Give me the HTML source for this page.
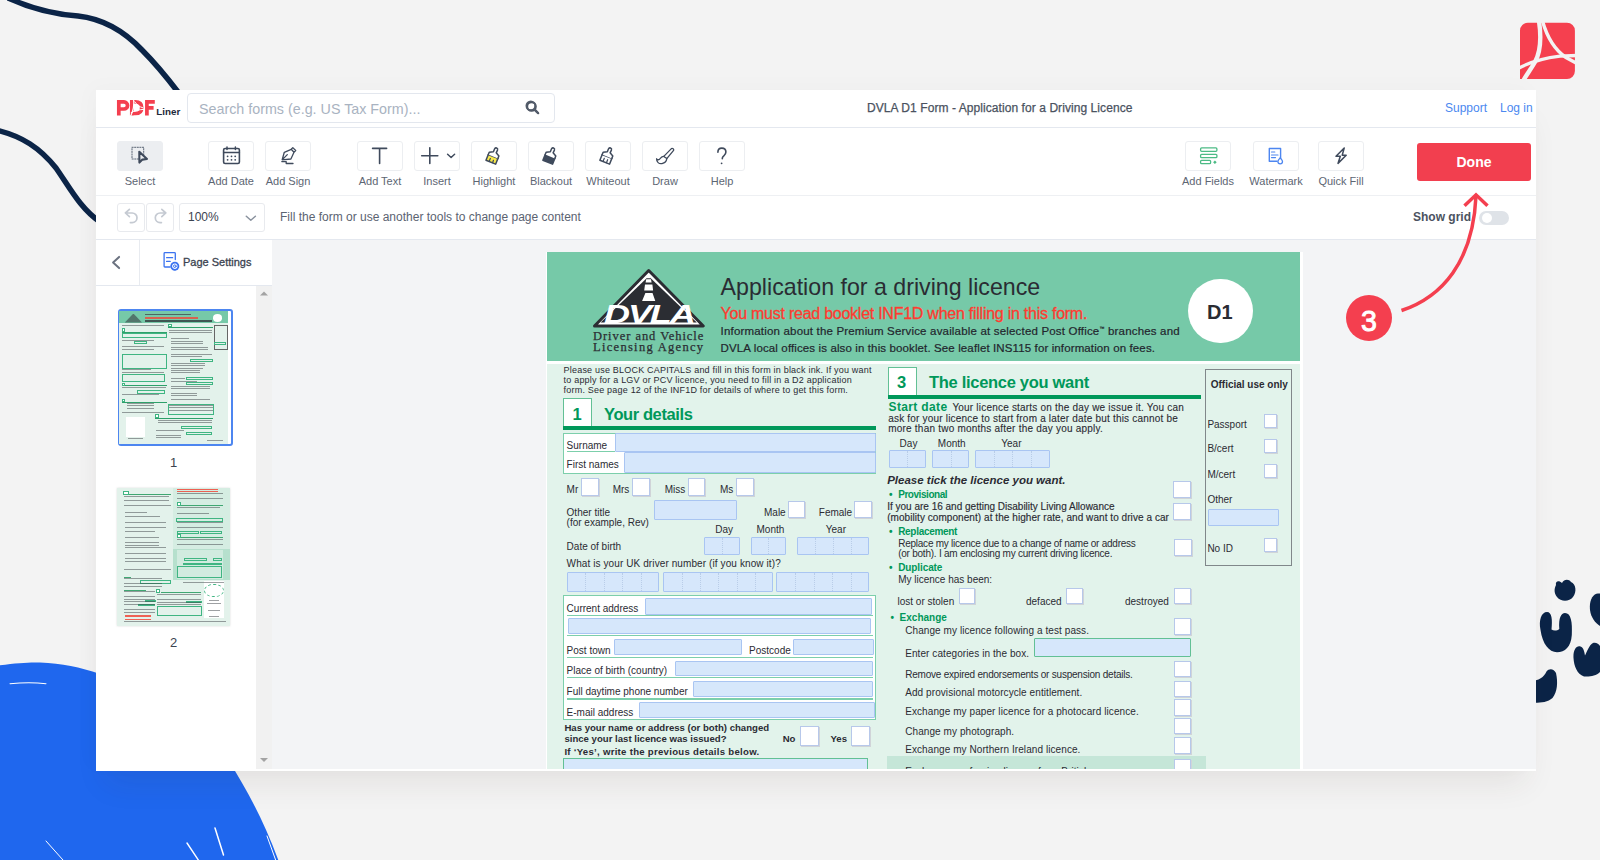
<!DOCTYPE html>
<html><head><meta charset="utf-8">
<style>
*{box-sizing:border-box;margin:0;padding:0}
html,body{width:1600px;height:860px;overflow:hidden;background:#f3f3f3;font-family:"Liberation Sans",sans-serif}
body{position:relative}
.a{position:absolute}
.hl{position:absolute;height:1px;background:#e6e9ef}
.tb{position:absolute;top:141px;width:46px;height:30px;border:1px solid #eceef1;border-radius:3px;background:#fff}
.tb.sel{background:#eceef1;border-color:#eceef1}
.tl{position:absolute;top:175px;font-size:11px;color:#5d6673;text-align:center;width:90px;margin-left:-22px;white-space:nowrap;line-height:12px}
.tb svg{position:absolute;left:0;top:0}
.wt{white-space:nowrap;line-height:1}
.t{position:absolute;white-space:nowrap;line-height:1}
</style></head>
<body>
<!-- background decorations -->
<svg class="a" style="left:0;top:0" width="1600" height="860">
  <defs>
    <filter id="sh" x="-10%" y="-10%" width="120%" height="130%"><feGaussianBlur stdDeviation="10"/></filter>
  </defs>
  <path d="M8,-2 C30,8 50,14 78,16 C105,19 125,32 142,50 C155,63 165,75 178,92" fill="none" stroke="#0b2447" stroke-width="5.5"/>
  <path d="M-4,130 C22,136 40,148 56,168 C70,188 80,208 100,222" fill="none" stroke="#0b2447" stroke-width="5.5"/>
  <!-- blue blob -->
  <path d="M-5,666 C15,663 30,662 40,662.5 C62,663.5 80,667 100,674 L200,720 L226,757 C240,778 262,815 279,862 L-5,862 Z" fill="#1f67ee"/>
  <g stroke="#fff" stroke-linecap="round" fill="none">
    <path d="M10,683.8 C22,682.5 36,682.5 46,683.8" stroke-width="1.1"/>
    <path d="M46,841 L63,860" stroke-width="1"/>
    <path d="M187,843 L199,861" stroke-width="1.4"/>
    <path d="M215,828 L223.5,855" stroke-width="1.5"/>
    <path d="M267,836 L276,861" stroke-width="1"/>
  </g>
  <!-- navy splotches -->
  <g fill="#0b2447">
    <path d="M1556,585 C1555,581 1559,580 1562,583 C1564,579 1569,579 1571,582 C1576,584 1577,592 1573,597 C1569,602 1561,602 1557,597 C1554,593 1554,589 1556,585 Z"/>
    <path d="M1540.5,630 C1538.5,620 1541.5,612 1547,612 C1552,612 1552.5,620 1551.5,629.5 C1553.5,631 1557,631 1559.3,629 C1558.5,618 1561,613 1565,613 C1571,613 1572.5,622 1571.8,635 C1571,647 1565,652.2 1557,652.2 C1549,652.2 1542.5,644 1540.5,630 Z"/>
    <path d="M1590,610 C1589,600 1593,594 1598,593.6 L1601,593.6 L1601,626.5 C1596,624 1591,618 1590,610 Z"/>
    <path d="M1573.5,658 C1573,650 1576.5,645 1580.5,646.5 C1583.5,647.5 1584.5,652 1585,655.5 C1587,652 1589,645 1593,643 C1598,642 1601,646 1601,650 L1601,671 C1597,676 1590,677 1584,676.5 C1577,674 1574,666 1573.5,658 Z"/>
    <path d="M1530,681 C1539,681 1544,677 1546.5,671.5 C1549,668 1554,668.5 1556,673 C1558,682 1557.5,692 1552.5,698 C1547,703 1538,703 1530,702.7 Z"/>
  </g>
  <!-- pdf logo top right -->
  <path d="M1527.9,22.8 L1567,22.8 A7.9,7.9 0 0 1 1574.9,30.7 L1574.9,71.1 A7.9,7.9 0 0 1 1567,79 L1520,79 L1520,30.7 A7.9,7.9 0 0 1 1527.9,22.8 Z" fill="#f5404f"/>
  <g stroke="#f3f3f3" fill="none">
    <path d="M1539,21 C1541.5,38 1540.5,52 1535,62 C1531,69 1527,74 1523,81" stroke-width="4.4"/>
    <path d="M1542.5,21 C1547,37 1555,50 1566,57.5 L1577,63.5" stroke-width="3.4"/>
    <path d="M1518,68.5 C1529,62.5 1542,58.5 1560,56.2 L1577,55.5" stroke-width="3.3"/>
  </g>
  <!-- window shadow -->
</svg>

<!-- window -->
<div class="a" style="left:96px;top:90px;width:1440px;height:681px;background:#fff;box-shadow:0 22px 30px -10px rgba(70,50,40,0.085), -6px -4px 20px rgba(0,0,0,0.02)"></div>
<div class="hl" style="left:96px;top:127px;width:1440px;background:#e4e8ef"></div>
<div class="hl" style="left:96px;top:195px;width:1440px;background:#eef0f3"></div>
<div class="hl" style="left:96px;top:239px;width:1440px;background:#e4e8ef"></div>

<!-- header -->
<svg class="a" style="left:110px;top:94px" width="50" height="26" viewBox="110 94 50 26" fill="none">
<path d="M118.8,115.4 L118.8,101.9 L124,101.9 A3.55,3.55 0 0 1 124,109 L118.8,109" stroke="#f43f4f" stroke-width="3.7"/>
<path d="M131.8,115.4 L131.8,101.9 L135.3,101.9 C140.3,101.9 141.7,105 141.7,107.7 C141.7,110.7 140.3,113.5 135.3,113.5 L131.8,113.5" stroke="#f43f4f" stroke-width="3.7"/>
<path d="M146.9,115.4 L146.9,101.9 L154.8,101.9 M146.9,107.9 L153.6,107.9" stroke="#f43f4f" stroke-width="3.7"/>
<path d="M133.6,99.5 C134.4,105 133.6,110 130.5,116.5" stroke="#fff" stroke-width="1.2"/>
<path d="M134.6,101.5 C136.5,104.5 139,106.8 143.5,108" stroke="#fff" stroke-width="1"/>
<path d="M130.8,112.8 C134.8,110.6 138.8,109.6 144,109.4" stroke="#fff" stroke-width="1"/>
</svg>
<div class="a wt" style="left:156.3px;top:106.6px;font-size:9.8px;font-weight:bold;color:#1e2a3b">Liner</div>
<div class="a" style="left:187px;top:93px;width:368px;height:30px;border:1px solid #e3e7ee;border-radius:4px"></div>
<div class="a wt" style="left:199px;top:102px;font-size:14.3px;color:#a9b3c1">Search forms (e.g. US Tax Form)...</div>
<svg class="a" style="left:525px;top:100px" width="16" height="16" viewBox="0 0 16 16"><circle cx="6.5" cy="6.5" r="4.3" fill="none" stroke="#4a5361" stroke-width="2"/><path d="M9.6,9.6 L13.2,13.2" stroke="#4a5361" stroke-width="2.2" stroke-linecap="round"/></svg>
<div class="a wt" style="left:867px;top:102px;font-size:12px;color:#4a5260;-webkit-text-stroke:0.25px #4a5260;letter-spacing:0.07px">DVLA D1 Form - Application for a Driving Licence</div>
<div class="a wt" style="left:1445px;top:102px;font-size:12px;color:#4b88f0">Support</div>
<div class="a wt" style="left:1500px;top:102px;font-size:12px;color:#4b88f0">Log in</div>

<!-- toolbar -->
<div class="tb sel" style="left:117px"></div><div class="tl" style="left:117px">Select</div>
<div class="tb" style="left:208px"></div><div class="tl" style="left:208px">Add Date</div>
<div class="tb" style="left:265px"></div><div class="tl" style="left:265px">Add Sign</div>
<div class="tb" style="left:357px"></div><div class="tl" style="left:357px">Add Text</div>
<div class="tb" style="left:414px"></div><div class="tl" style="left:414px">Insert</div>
<div class="tb" style="left:471px"></div><div class="tl" style="left:471px">Highlight</div>
<div class="tb" style="left:528px"></div><div class="tl" style="left:528px">Blackout</div>
<div class="tb" style="left:585px"></div><div class="tl" style="left:585px">Whiteout</div>
<div class="tb" style="left:642px"></div><div class="tl" style="left:642px">Draw</div>
<div class="tb" style="left:699px"></div><div class="tl" style="left:699px">Help</div>
<div class="tb" style="left:1185px"></div><div class="tl" style="left:1185px">Add Fields</div>
<div class="tb" style="left:1253px"></div><div class="tl" style="left:1253px">Watermark</div>
<div class="tb" style="left:1318px"></div><div class="tl" style="left:1318px">Quick Fill</div>
<div class="a" style="left:1417px;top:143px;width:114px;height:38px;background:#f23f4f;border-radius:3px"></div>
<div class="a wt" style="left:1417px;top:155px;width:114px;text-align:center;font-size:14px;font-weight:bold;color:#fff">Done</div>

<!-- third row -->
<div class="a" style="left:117px;top:203px;width:28px;height:29px;border:1px solid #e8eaee;border-radius:3px"></div>
<div class="a" style="left:146px;top:203px;width:28px;height:29px;border:1px solid #e8eaee;border-radius:3px"></div>
<div class="a" style="left:179px;top:203px;width:86px;height:29px;border:1px solid #e8eaee;border-radius:3px"></div>
<div class="a wt" style="left:188px;top:211px;font-size:12px;color:#3b4350">100%</div>
<div class="a wt" style="left:280px;top:211px;font-size:12px;color:#5b6371">Fill the form or use another tools to change page content</div>
<div class="a wt" style="left:1413px;top:211px;font-size:12px;font-weight:bold;color:#4a5260">Show grid</div>
<div class="a" style="left:1479px;top:211px;width:30px;height:14px;border-radius:7px;background:#dfe3e8"></div>
<div class="a" style="left:1482px;top:213px;width:10px;height:10px;border-radius:5px;background:#fff"></div>

<!-- chrome icons -->
<svg class="a" style="left:0;top:0" width="1600" height="860" fill="none" stroke-linecap="round" stroke-linejoin="round">
  <!-- search -->
  <circle cx="530.8" cy="105.8" r="4.4" stroke="#535c6a" stroke-width="1.8"/>
  <path d="M534.2,109.2 L537.8,112.8" stroke="#535c6a" stroke-width="2"/>
  <!-- select -->
  <rect x="132" y="147.3" width="11.7" height="11.7" stroke="#5a6474" stroke-width="1" stroke-dasharray="1.2 1.4"/>
  <path d="M139.3,151.8 L139.4,162.6 L142.4,159.6 L147,159 Z" fill="#eceef1" stroke="#3f4a5c" stroke-width="2.1"/>
  <!-- calendar -->
  <rect x="223.6" y="148.5" width="15.8" height="15" rx="1.5" stroke="#3f4a5c" stroke-width="1.6"/>
  <path d="M223.6,152.6 L239.4,152.6 M227,147 L227,149.5 M235.4,147 L235.4,149.5" stroke="#3f4a5c" stroke-width="1.5"/>
  <g fill="#3f4a5c"><circle cx="227.6" cy="156.3" r="0.9"/><circle cx="231.5" cy="156.3" r="0.9"/><circle cx="235.2" cy="156.3" r="0.9"/><circle cx="227.6" cy="159.8" r="0.9"/><circle cx="231.5" cy="159.8" r="0.9"/><circle cx="235.2" cy="159.8" r="0.9"/></g>
  <!-- pen -->
  <path d="M282.2,159.8 L284.3,152.3 L291.2,149.3 L294,152.2 L290.9,159 Z M291.2,149.3 L292.8,147.6 L295.7,150.5 L294,152.2 M282.4,159.6 L287.3,154.6" stroke="#3f4a5c" stroke-width="1.3"/>
  <path d="M281.8,161.6 L286.2,161.6 L286.2,163.5 L293,163.5" stroke="#3f4a5c" stroke-width="1.3"/>
  <!-- T -->
  <path d="M372.6,148.4 L386.6,148.4 M379.6,148.4 L379.6,163.4" stroke="#3f4a5c" stroke-width="1.6"/>
  <!-- plus + chevron -->
  <path d="M421.7,155.8 L437.8,155.8 M429.8,147.8 L429.8,163.5" stroke="#3f4a5c" stroke-width="1.6"/>
  <path d="M447.6,154.3 L451.1,157.5 L454.6,154.3" stroke="#3f4a5c" stroke-width="1.5"/>
  <!-- highlight brush -->
  <g transform="translate(493.5 155.5) rotate(22)">
    <path d="M-5.2,1 L5.2,1 L5.2,7.2 L-5.2,7.2 Z" fill="#f7e84a" stroke="#3f4a5c" stroke-width="1.5"/>
    <path d="M-5.2,1 L-5.2,-1.5 L-1.5,-3.5 L-1.5,-6.5 A1.6,1.6 0 0 1 1.7,-6.5 L1.5,-3.5 L5.2,-1.5 L5.2,1" fill="#fff" stroke="#3f4a5c" stroke-width="1.5"/>
    <path d="M-1.8,4 L-1.8,7 M1.8,4.5 L1.8,7" stroke="#3f4a5c" stroke-width="1.2"/>
  </g>
  <!-- blackout brush -->
  <g transform="translate(550.4 155.5) rotate(22)">
    <path d="M-5.2,1 L5.2,1 L5.2,7.2 L-5.2,7.2 Z" fill="#3f4a5c" stroke="#3f4a5c" stroke-width="1.5"/>
    <path d="M-5.2,1 L-5.2,-1.5 L-1.5,-3.5 L-1.5,-6.5 A1.6,1.6 0 0 1 1.7,-6.5 L1.5,-3.5 L5.2,-1.5 L5.2,1" fill="#fff" stroke="#3f4a5c" stroke-width="1.5"/>
  </g>
  <!-- whiteout brush -->
  <g transform="translate(607.4 155.5) rotate(22)">
    <path d="M-5.2,1 L5.2,1 L5.2,7.2 L-5.2,7.2 Z" fill="#fff" stroke="#3f4a5c" stroke-width="1.5"/>
    <path d="M-5.2,1 L-5.2,-1.5 L-1.5,-3.5 L-1.5,-6.5 A1.6,1.6 0 0 1 1.7,-6.5 L1.5,-3.5 L5.2,-1.5 L5.2,1" fill="#fff" stroke="#3f4a5c" stroke-width="1.5"/>
    <path d="M-1.8,3.8 L-1.8,7 M1.8,3.8 L1.8,7" stroke="#3f4a5c" stroke-width="1.2"/>
  </g>
  <!-- draw -->
  <path d="M663.8,156.4 L671.4,148.6 A1.5,1.5 0 0 1 673.6,150.4 L666.8,158.6 Z" stroke="#3f4a5c" stroke-width="1.3"/>
  <path d="M663.8,156.4 C661.5,156.2 660.6,158.2 659.5,159.2 C658.5,160 657.4,159.8 656.6,158.8 C656.4,162 659,164.2 662,163.6 C664.8,163 666.5,160.8 666.8,158.6" stroke="#3f4a5c" stroke-width="1.3"/>
  <!-- help -->
  <path d="M717.9,152.2 C717.9,149.6 719.6,148.1 721.8,148.1 C724.2,148.1 725.9,149.8 725.9,152 C725.9,154.3 724.2,155.3 723.1,156.6 C722.5,157.3 722.3,158 722.3,158.8" stroke="#3f4a5c" stroke-width="1.6"/>
  <circle cx="721.6" cy="163.3" r="0.9" fill="#3f4a5c"/>
  <!-- add fields -->
  <g stroke="#4cbb85" stroke-width="1.3">
    <rect x="1200.6" y="147.9" width="16.3" height="3.4" rx="1"/>
    <rect x="1200.6" y="154.3" width="16.3" height="3.4" rx="1"/>
    <rect x="1200.6" y="160.3" width="10" height="3.4" rx="1"/>
  </g>
  <path d="M1214.9,160.4 L1216.7,162.2 L1214.9,164 L1213.1,162.2 Z" fill="#4cbb85"/>
  <!-- watermark -->
  <path d="M1280.6,158.5 L1280.6,148.5 L1269.3,148.5 L1269.3,161.2 L1277,161.2" stroke="#4d86f0" stroke-width="1.4"/>
  <path d="M1271.5,152 L1274.8,152 M1271.5,155 L1278,155 M1271.5,157.6 L1275.5,157.6" stroke="#4d86f0" stroke-width="1.2"/>
  <path d="M1280.2,157.8 C1281.6,159.4 1282.5,160.4 1282.5,161.5 A2.3,2.3 0 0 1 1277.9,161.5 C1277.9,160.4 1278.8,159.4 1280.2,157.8 Z" stroke="#4d86f0" stroke-width="1.3"/>
  <!-- quick fill -->
  <path d="M1344.2,148 L1336,156.3 L1340.3,156.3 L1338,163.4 L1346.2,155.3 L1342.2,155.3 Z" stroke="#3f4a5c" stroke-width="1.5"/>
  <!-- undo / redo -->
  <path d="M129.4,209.4 L125.4,213 L129.4,216.7 M125.6,213 L132.2,213 A4.8,4.8 0 0 1 132.2,222.6 L130.4,222.6" stroke="#c5cad2" stroke-width="1.7"/>
  <path d="M161.8,209.4 L165.8,213 L161.8,216.7 M165.6,213 L160.1,213 A4.8,4.8 0 0 0 160.1,222.6 L161.4,222.6" stroke="#c5cad2" stroke-width="1.7"/>
  <!-- zoom chevron -->
  <path d="M246.3,216.3 L250.8,220.3 L255.4,216.3" stroke="#8a929e" stroke-width="1.5"/>
  <!-- back chevron -->
  <path d="M119.1,256.9 L113.1,262.5 L119.1,268.1" stroke="#6b7280" stroke-width="2"/>
  <!-- page settings icon -->
  <path d="M175.3,259.5 L175.3,253.5 A0.8,0.8 0 0 0 174.5,252.7 L164.9,252.7 A0.8,0.8 0 0 0 164.1,253.5 L164.1,266.2 A0.8,0.8 0 0 0 164.9,267 L170,267" stroke="#3b73f0" stroke-width="1.3"/>
  <path d="M166.6,257.7 L172.6,257.7 M166.6,261.4 L170.2,261.4" stroke="#3b73f0" stroke-width="1.3"/>
  <circle cx="174.8" cy="266.2" r="3.6" stroke="#3b73f0" stroke-width="1.8" stroke-dasharray="1.6 0.9"/>
  <circle cx="174.8" cy="266.2" r="1.3" stroke="#3b73f0" stroke-width="1"/>
</svg>
<!-- left panel -->
<div class="a" style="left:138.5px;top:240px;width:1px;height:45px;background:#e8ebf0"></div>
<div class="hl" style="left:96px;top:285px;width:176px;background:#e4e8ef"></div>
<div class="a" style="left:256px;top:286px;width:16px;height:483px;background:#f1f1f1"></div>
<div class="a" style="left:272px;top:240px;width:1264px;height:529px;background:#f3f4f6"></div>
<div class="a wt" style="left:183px;top:257px;font-size:11px;color:#3b4350;-webkit-text-stroke:0.3px #3b4350">Page Settings</div>
<div class="a wt" style="left:170px;top:456px;font-size:13px;color:#3b4350">1</div>
<div class="a wt" style="left:170px;top:636px;font-size:13px;color:#3b4350">2</div>
<div class="a" style="left:0;top:0;width:1600px;height:860px;filter:blur(0.35px)">
<div class="a" style="left:117.5px;top:309.0px;width:115.2px;height:137.0px;background:#fff;border:2px solid #4d86f0;border-radius:3px"></div>
<div class="a" style="left:119.1px;top:310.6px;width:109.0px;height:133.3px;background:#e3f2eb"></div>
<div class="a" style="left:119.1px;top:310.6px;width:109.0px;height:12.8px;background:#76c9a8"></div>
<div class="a" style="left:124.8px;top:313.6px;width:17.2px;height:9.0px;background:#3b3f44;clip-path:polygon(50% 0,100% 100%,0 100%);opacity:.6"></div>
<div class="a" style="left:144.5px;top:313.9px;width:46.7px;height:1.3px;background:#3a3d44;opacity:.7"></div>
<div class="a" style="left:144.5px;top:317.3px;width:53.3px;height:1.5px;background:#f0483a;opacity:.8"></div>
<div class="a" style="left:144.5px;top:319.6px;width:67.2px;height:3.1px;background:repeating-linear-gradient(#2c3036 0 2px,transparent 2px 3.5px);opacity:.75"></div>
<div class="a" style="left:212.5px;top:314.4px;width:9.0px;height:7.4px;background:#fff;border-radius:50%"></div>
<div class="a" style="left:121.6px;top:328.0px;width:3.6px;height:3.9px;background:#fff;border:1px solid #3fb582"></div>
<div class="a" style="left:168.3px;top:323.9px;width:3.6px;height:3.6px;background:#fff;border:1px solid #3fb582"></div>
<div class="a" style="left:121.6px;top:398.8px;width:3.6px;height:3.0px;background:#fff;border:1px solid #3fb582"></div>
<div class="a" style="left:155.2px;top:414.4px;width:4.1px;height:4.1px;background:#fff;border:1px solid #3fb582"></div>
<div class="a" style="left:121.6px;top:331.6px;width:45.1px;height:0.7px;background:#2ea06a"></div>
<div class="a" style="left:168.3px;top:327.3px;width:45.1px;height:0.5px;background:#2ea06a"></div>
<div class="a" style="left:121.6px;top:401.6px;width:45.1px;height:0.5px;background:#2ea06a"></div>
<div class="a" style="left:155.2px;top:418.3px;width:58.2px;height:0.5px;background:#2ea06a"></div>
<div class="a" style="left:121.6px;top:385.4px;width:45.1px;height:0.5px;background:#2ea06a"></div>
<div class="a" style="left:121.6px;top:332.9px;width:45.1px;height:5.6px;border:1px solid #3fb582"></div>
<div class="a" style="left:134.3px;top:341.1px;width:12.6px;height:3.0px;border:1px solid #3fb582"></div>
<div class="a" style="left:121.6px;top:353.7px;width:45.1px;height:15.6px;border:1px solid #3fb582"></div>
<div class="a" style="left:121.6px;top:374.2px;width:43.4px;height:7.4px;border:1px solid #3fb582"></div>
<div class="a" style="left:137.1px;top:390.3px;width:27.9px;height:3.3px;border:1px solid #3fb582"></div>
<div class="a" style="left:189.6px;top:358.5px;width:23.3px;height:3.1px;border:1px solid #3fb582"></div>
<div class="a" style="left:185.5px;top:376.5px;width:27.4px;height:3.1px;border:1px solid #3fb582"></div>
<div class="a" style="left:185.5px;top:382.1px;width:27.4px;height:3.3px;border:1px solid #3fb582"></div>
<div class="a" style="left:168.3px;top:403.7px;width:46.2px;height:11.5px;border:1px solid #3fb582"></div>
<div class="a" style="left:180.6px;top:426.3px;width:31.1px;height:3.0px;border:1px solid #3fb582"></div>
<div class="a" style="left:185.5px;top:432.2px;width:26.2px;height:3.0px;border:1px solid #3fb582"></div>
<div class="a" style="left:214.2px;top:324.7px;width:13.4px;height:25.7px;border:1px solid #666"></div>
<div class="a" style="left:214.2px;top:341.9px;width:11.5px;height:3.1px;border:1px solid #3fb582"></div>
<div class="a" style="left:125.7px;top:416.5px;width:18.9px;height:20.0px;background:#fff"></div>
<div class="a" style="left:121.6px;top:382.7px;width:3.6px;height:3.3px;background:#fff;border:1px solid #3fb582"></div>
<div class="a" style="left:121.6px;top:325.4px;width:42.6px;height:1.3px;background:repeating-linear-gradient(#3d4247 0 0.8px,transparent 0.8px 2.4px);opacity:.5"></div>
<div class="a" style="left:121.6px;top:339.8px;width:32.8px;height:1.0px;background:repeating-linear-gradient(#3d4247 0 0.8px,transparent 0.8px 2.4px);opacity:.5"></div>
<div class="a" style="left:121.6px;top:345.7px;width:42.6px;height:1.0px;background:repeating-linear-gradient(#3d4247 0 0.8px,transparent 0.8px 2.4px);opacity:.5"></div>
<div class="a" style="left:121.6px;top:349.0px;width:32.8px;height:1.0px;background:repeating-linear-gradient(#3d4247 0 0.8px,transparent 0.8px 2.4px);opacity:.5"></div>
<div class="a" style="left:121.6px;top:369.3px;width:29.5px;height:1.3px;background:repeating-linear-gradient(#3d4247 0 0.8px,transparent 0.8px 2.4px);opacity:.5"></div>
<div class="a" style="left:121.6px;top:371.9px;width:42.6px;height:1.0px;background:repeating-linear-gradient(#3d4247 0 0.8px,transparent 0.8px 2.4px);opacity:.5"></div>
<div class="a" style="left:121.6px;top:387.3px;width:44.3px;height:1.0px;background:repeating-linear-gradient(#3d4247 0 0.8px,transparent 0.8px 2.4px);opacity:.5"></div>
<div class="a" style="left:121.6px;top:393.9px;width:37.7px;height:1.0px;background:repeating-linear-gradient(#3d4247 0 0.8px,transparent 0.8px 2.4px);opacity:.5"></div>
<div class="a" style="left:127.3px;top:403.4px;width:27.0px;height:6.9px;background:repeating-linear-gradient(#3d4247 0 0.8px,transparent 0.8px 2.4px);opacity:.5"></div>
<div class="a" style="left:121.6px;top:411.9px;width:42.6px;height:1.6px;background:repeating-linear-gradient(#3d4247 0 0.8px,transparent 0.8px 2.4px);opacity:.5"></div>
<div class="a" style="left:169.1px;top:330.0px;width:42.6px;height:3.3px;background:repeating-linear-gradient(#3d4247 0 0.8px,transparent 0.8px 2.4px);opacity:.5"></div>
<div class="a" style="left:170.7px;top:338.1px;width:18.0px;height:1.0px;background:repeating-linear-gradient(#3d4247 0 0.8px,transparent 0.8px 2.4px);opacity:.5"></div>
<div class="a" style="left:170.7px;top:341.4px;width:32.8px;height:3.3px;background:repeating-linear-gradient(#3d4247 0 0.8px,transparent 0.8px 2.4px);opacity:.5"></div>
<div class="a" style="left:170.7px;top:347.2px;width:37.7px;height:4.9px;background:repeating-linear-gradient(#3d4247 0 0.8px,transparent 0.8px 2.4px);opacity:.5"></div>
<div class="a" style="left:170.7px;top:353.7px;width:41.0px;height:1.1px;background:repeating-linear-gradient(#3d4247 0 0.8px,transparent 0.8px 2.4px);opacity:.5"></div>
<div class="a" style="left:170.7px;top:356.2px;width:31.1px;height:1.6px;background:repeating-linear-gradient(#3d4247 0 0.8px,transparent 0.8px 2.4px);opacity:.5"></div>
<div class="a" style="left:170.7px;top:362.7px;width:34.4px;height:4.1px;background:repeating-linear-gradient(#3d4247 0 0.8px,transparent 0.8px 2.4px);opacity:.5"></div>
<div class="a" style="left:170.7px;top:368.0px;width:32.8px;height:1.3px;background:repeating-linear-gradient(#3d4247 0 0.8px,transparent 0.8px 2.4px);opacity:.5"></div>
<div class="a" style="left:170.7px;top:370.1px;width:29.5px;height:3.3px;background:repeating-linear-gradient(#3d4247 0 0.8px,transparent 0.8px 2.4px);opacity:.5"></div>
<div class="a" style="left:170.7px;top:377.5px;width:14.8px;height:1.6px;background:repeating-linear-gradient(#3d4247 0 0.8px,transparent 0.8px 2.4px);opacity:.5"></div>
<div class="a" style="left:170.7px;top:380.8px;width:26.2px;height:1.0px;background:repeating-linear-gradient(#3d4247 0 0.8px,transparent 0.8px 2.4px);opacity:.5"></div>
<div class="a" style="left:170.7px;top:385.7px;width:39.3px;height:4.9px;background:repeating-linear-gradient(#3d4247 0 0.8px,transparent 0.8px 2.4px);opacity:.5"></div>
<div class="a" style="left:170.7px;top:393.1px;width:26.2px;height:4.1px;background:repeating-linear-gradient(#3d4247 0 0.8px,transparent 0.8px 2.4px);opacity:.5"></div>
<div class="a" style="left:170.7px;top:398.8px;width:39.3px;height:2.5px;background:repeating-linear-gradient(#3d4247 0 0.8px,transparent 0.8px 2.4px);opacity:.5"></div>
<div class="a" style="left:169.1px;top:405.0px;width:44.3px;height:6.9px;background:repeating-linear-gradient(#3d4247 0 0.8px,transparent 0.8px 2.4px);opacity:.5"></div>
<div class="a" style="left:157.6px;top:420.1px;width:54.1px;height:3.6px;background:repeating-linear-gradient(#3d4247 0 0.8px,transparent 0.8px 2.4px);opacity:.5"></div>
<div class="a" style="left:156.0px;top:430.0px;width:27.9px;height:1.6px;background:repeating-linear-gradient(#3d4247 0 0.8px,transparent 0.8px 2.4px);opacity:.5"></div>
<div class="a" style="left:156.0px;top:434.9px;width:24.6px;height:4.1px;background:repeating-linear-gradient(#3d4247 0 0.8px,transparent 0.8px 2.4px);opacity:.5"></div>
<div class="a" style="left:128.1px;top:438.1px;width:14.8px;height:1.0px;background:repeating-linear-gradient(#3d4247 0 0.8px,transparent 0.8px 2.4px);opacity:.5"></div>
<div class="a" style="left:206.8px;top:440.1px;width:16.4px;height:1.0px;background:repeating-linear-gradient(#3d4247 0 0.8px,transparent 0.8px 2.4px);opacity:.5"></div>
<div class="a" style="left:116.7px;top:488.0px;width:113.0px;height:137.8px;background:#e3f2eb;box-shadow:0 0 2px rgba(0,0,0,.15)"></div>
<div class="a" style="left:173.2px;top:488.4px;width:56.5px;height:60.7px;background:#d5ede2"></div>
<div class="a" style="left:173.2px;top:549.1px;width:56.5px;height:31.2px;background:#b6e0cd"></div>
<div class="a" style="left:176.6px;top:550.4px;width:46.4px;height:28.2px;background:#e3f2eb;opacity:.6"></div>
<div class="a" style="left:203.5px;top:581.1px;width:20.2px;height:37.1px;background:#fff"></div>
<div class="a" style="left:204.4px;top:583.7px;width:19.4px;height:13.5px;border:1px dashed #3fb582;border-radius:50%"></div>
<div class="a" style="left:123.4px;top:490.9px;width:5.9px;height:3.9px;background:#fff;border:1px solid #3fb582"></div>
<div class="a" style="left:176.6px;top:501.9px;width:4.6px;height:3.7px;background:#fff;border:1px solid #3fb582"></div>
<div class="a" style="left:176.6px;top:533.9px;width:4.6px;height:4.2px;background:#fff;border:1px solid #3fb582"></div>
<div class="a" style="left:156.3px;top:588.7px;width:4.2px;height:4.2px;background:#fff;border:1px solid #3fb582"></div>
<div class="a" style="left:129.3px;top:493.8px;width:41.3px;height:0.7px;background:#3fa772"></div>
<div class="a" style="left:181.1px;top:504.9px;width:41.8px;height:0.7px;background:#3fa772"></div>
<div class="a" style="left:181.1px;top:537.3px;width:41.8px;height:0.7px;background:#3fa772"></div>
<div class="a" style="left:160.5px;top:592.3px;width:40.5px;height:0.7px;background:#3fa772"></div>
<div class="a" style="left:124.3px;top:576.9px;width:6.7px;height:0.8px;background:#3fa772"></div>
<div class="a" style="left:124.3px;top:589.9px;width:21.9px;height:1.0px;background:#3fa772"></div>
<div class="a" style="left:175.7px;top:517.9px;width:47.2px;height:3.9px;border:1px solid #3fb582"></div>
<div class="a" style="left:176.6px;top:530.5px;width:22.8px;height:3.7px;border:1px solid #3fb582"></div>
<div class="a" style="left:200.2px;top:530.5px;width:21.9px;height:3.7px;border:1px solid #3fb582"></div>
<div class="a" style="left:184.1px;top:557.8px;width:22.8px;height:3.0px;border:1px solid #3fb582"></div>
<div class="a" style="left:212.8px;top:557.8px;width:9.3px;height:3.0px;border:1px solid #3fb582"></div>
<div class="a" style="left:183.3px;top:562.6px;width:38.8px;height:2.5px;border:1px solid #3fb582"></div>
<div class="a" style="left:176.6px;top:565.9px;width:45.5px;height:12.6px;border:1px solid #3fb582"></div>
<div class="a" style="left:139.5px;top:580.3px;width:31.2px;height:3.4px;border:1px solid #3fb582"></div>
<div class="a" style="left:144.5px;top:599.7px;width:11.0px;height:2.5px;border:1px solid #3fb582"></div>
<div class="a" style="left:137.8px;top:603.9px;width:17.7px;height:2.5px;border:1px solid #3fb582"></div>
<div class="a" style="left:157.2px;top:606.4px;width:44.7px;height:9.3px;border:1px solid #3fb582"></div>
<div class="a" style="left:185.8px;top:600.5px;width:16.0px;height:2.9px;border:1px solid #3fb582"></div>
<div class="a" style="left:176.6px;top:489.2px;width:41.7px;height:2.5px;background:repeating-linear-gradient(#f0483a 0 1.2px,transparent 1.2px 2px);opacity:.85"></div>
<div class="a" style="left:125.1px;top:614.8px;width:26.1px;height:5.1px;background:repeating-linear-gradient(#f0483a 0 2px,transparent 2px 4px);opacity:.85"></div>
<div class="a" style="left:124.3px;top:496.0px;width:44.7px;height:2.5px;background:repeating-linear-gradient(#3d4247 0 0.8px,transparent 0.8px 2.6px);opacity:.5"></div>
<div class="a" style="left:124.3px;top:500.2px;width:44.7px;height:3.7px;background:repeating-linear-gradient(#3d4247 0 0.8px,transparent 0.8px 2.6px);opacity:.5"></div>
<div class="a" style="left:124.3px;top:504.9px;width:46.4px;height:5.4px;background:repeating-linear-gradient(#3d4247 0 0.8px,transparent 0.8px 2.6px);opacity:.5"></div>
<div class="a" style="left:125.1px;top:511.6px;width:21.9px;height:2.9px;background:repeating-linear-gradient(#3d4247 0 0.8px,transparent 0.8px 2.6px);opacity:.5"></div>
<div class="a" style="left:125.1px;top:515.7px;width:35.4px;height:3.9px;background:repeating-linear-gradient(#3d4247 0 0.8px,transparent 0.8px 2.6px);opacity:.5"></div>
<div class="a" style="left:125.1px;top:522.1px;width:41.3px;height:6.7px;background:repeating-linear-gradient(#3d4247 0 0.8px,transparent 0.8px 2.6px);opacity:.5"></div>
<div class="a" style="left:125.1px;top:530.5px;width:29.5px;height:5.1px;background:repeating-linear-gradient(#3d4247 0 0.8px,transparent 0.8px 2.6px);opacity:.5"></div>
<div class="a" style="left:125.1px;top:536.9px;width:33.7px;height:8.8px;background:repeating-linear-gradient(#3d4247 0 0.8px,transparent 0.8px 2.6px);opacity:.5"></div>
<div class="a" style="left:125.1px;top:546.7px;width:40.5px;height:4.9px;background:repeating-linear-gradient(#3d4247 0 0.8px,transparent 0.8px 2.6px);opacity:.5"></div>
<div class="a" style="left:125.1px;top:552.8px;width:40.5px;height:9.8px;background:repeating-linear-gradient(#3d4247 0 0.8px,transparent 0.8px 2.6px);opacity:.5"></div>
<div class="a" style="left:124.3px;top:568.5px;width:46.4px;height:5.9px;background:repeating-linear-gradient(#3d4247 0 0.8px,transparent 0.8px 2.6px);opacity:.5"></div>
<div class="a" style="left:124.3px;top:578.1px;width:37.9px;height:9.8px;background:repeating-linear-gradient(#3d4247 0 0.8px,transparent 0.8px 2.6px);opacity:.5"></div>
<div class="a" style="left:124.3px;top:591.2px;width:30.4px;height:21.9px;background:repeating-linear-gradient(#3d4247 0 0.8px,transparent 0.8px 2.6px);opacity:.5"></div>
<div class="a" style="left:176.6px;top:492.6px;width:46.4px;height:6.7px;background:repeating-linear-gradient(#3d4247 0 0.8px,transparent 0.8px 2.6px);opacity:.5"></div>
<div class="a" style="left:176.6px;top:506.6px;width:43.0px;height:5.4px;background:repeating-linear-gradient(#3d4247 0 0.8px,transparent 0.8px 2.6px);opacity:.5"></div>
<div class="a" style="left:176.6px;top:513.3px;width:32.9px;height:2.0px;background:repeating-linear-gradient(#3d4247 0 0.8px,transparent 0.8px 2.6px);opacity:.5"></div>
<div class="a" style="left:176.6px;top:522.4px;width:46.4px;height:6.7px;background:repeating-linear-gradient(#3d4247 0 0.8px,transparent 0.8px 2.6px);opacity:.5"></div>
<div class="a" style="left:176.6px;top:539.3px;width:46.4px;height:8.1px;background:repeating-linear-gradient(#3d4247 0 0.8px,transparent 0.8px 2.6px);opacity:.5"></div>
<div class="a" style="left:183.3px;top:582.0px;width:40.5px;height:0.8px;background:repeating-linear-gradient(#3d4247 0 0.8px,transparent 0.8px 2.6px);opacity:.5"></div>
<div class="a" style="left:209.4px;top:599.7px;width:10.1px;height:1.7px;background:repeating-linear-gradient(#3d4247 0 0.8px,transparent 0.8px 2.6px);opacity:.5"></div>
<div class="a" style="left:206.9px;top:603.0px;width:14.3px;height:2.0px;background:repeating-linear-gradient(#3d4247 0 0.8px,transparent 0.8px 2.6px);opacity:.5"></div>
<div class="a" style="left:207.7px;top:609.8px;width:12.6px;height:1.3px;background:repeating-linear-gradient(#3d4247 0 0.8px,transparent 0.8px 2.6px);opacity:.5"></div>
<div class="a" style="left:209.4px;top:616.2px;width:9.3px;height:1.2px;background:repeating-linear-gradient(#3d4247 0 0.8px,transparent 0.8px 2.6px);opacity:.5"></div>
<div class="a" style="left:157.2px;top:593.8px;width:43.8px;height:11.8px;background:repeating-linear-gradient(#3d4247 0 0.8px,transparent 0.8px 2.6px);opacity:.5"></div>
<div class="a" style="left:124.3px;top:620.8px;width:102.0px;height:4.2px;background:repeating-linear-gradient(#3d4247 0 0.8px,transparent 0.8px 2.6px);opacity:.5"></div>
</div>
<svg class="a" style="left:256px;top:286px" width="16" height="485"><path d="M4,9.5 L12,9.5 L8,5.5 Z" fill="#a3a3a3"/><path d="M4,472 L12,472 L8,476 Z" fill="#a3a3a3"/></svg>

<!-- form page -->
<div class="a" style="left:0;top:0;width:1600px;height:769px;overflow:hidden">
<div class="a" style="left:546.0px;top:252.0px;width:757.0px;height:519.0px;background:#fff"></div>
<div class="a" style="left:546.5px;top:252.0px;width:753.5px;height:109.0px;background:#76c9a8"></div>
<div class="a" style="left:546.5px;top:363.8px;width:753.5px;height:407.2px;background:#e2f3eb"></div>
<div class="t" style="left:720.6px;top:275.66px;font-size:23.2px;color:#2a2c33;">Application for a driving licence</div>
<div class="t" style="left:720.6px;top:306.15px;font-size:16px;color:#ff3b30;letter-spacing:-0.25px;-webkit-text-stroke:0.3px #ff3b30">You must read booklet INF1D when filling in this form.</div>
<div class="t" style="left:720.6px;top:326.06px;font-size:11.5px;color:#23262d;letter-spacing:0.18px;-webkit-text-stroke:0.2px #23262d">Information about the Premium Service available at selected Post Office<sup style="font-size:5px;vertical-align:5px">™</sup> branches and</div>
<div class="t" style="left:720.6px;top:342.66px;font-size:11.5px;color:#23262d;letter-spacing:0.12px;-webkit-text-stroke:0.2px #23262d">DVLA local offices is also in this booklet. See leaflet INS115 for information on fees.</div>
<div class="a" style="left:1188.0px;top:278.5px;width:64.5px;height:64.5px;background:#fff;border-radius:50%"></div>
<div class="t" style="left:1207.0px;top:301.87px;font-size:20px;color:#2a2c33;font-weight:bold">D1</div>
<svg class="a" style="left:588px;top:265px" width="124" height="92" viewBox="588 265 124 92">
<path d="M648.7,270.5 L703.3,326 L594.5,326 Z" fill="#fff" stroke="#2b2d33" stroke-width="3" stroke-linejoin="round"/>
<path d="M648.7,276.2 L696.8,322.6 L600.6,322.6 Z" fill="#2b2d33"/>
<path d="M647.4,275.6 L650,275.6 L650.6,278.3 L646.8,278.3 Z M646.2,279.2 L651,279.2 L651.6,282.6 L645.6,282.6 Z M645,284.4 L652.4,284.4 L653.1,290.6 L644.2,290.6 Z M645.4,292.9 L652.5,292.9 L655.3,300.9 L642.1,300.9 Z" fill="#fff"/>
<text x="648.8" y="323.2" text-anchor="middle" font-family="Liberation Sans" font-weight="bold" font-style="italic" font-size="26.5" fill="#fff" letter-spacing="-1.6" transform="translate(648.8 323.2) scale(1.36 0.96) translate(-648.8 -323.2)">DVLA</text>
<text x="593" y="340" font-family="Liberation Serif" font-size="12.5" fill="#2b2d33" stroke="#2b2d33" stroke-width="0.25" letter-spacing="0.95">Driver and Vehicle</text>
<text x="593" y="350.8" font-family="Liberation Serif" font-size="12.5" fill="#2b2d33" stroke="#2b2d33" stroke-width="0.25" letter-spacing="1.3">Licensing Agency</text>
</svg>
<div class="t" style="left:563.6px;top:365.58px;font-size:9px;color:#2b2b33;letter-spacing:0.2px">Please use BLOCK CAPITALS and fill in this form in black ink. If you want</div>
<div class="t" style="left:563.6px;top:375.68px;font-size:9px;color:#2b2b33;letter-spacing:0.2px">to apply for a LGV or PCV licence, you need to fill in a D2 application</div>
<div class="t" style="left:563.6px;top:385.78px;font-size:9px;color:#2b2b33;letter-spacing:0.2px">form. See page 12 of the INF1D for details of where to get this form.</div>
<div class="a" style="left:563.3px;top:398.2px;width:28.7px;height:27.8px;background:#fff;border:1px solid #62c095;border-bottom:none"></div>
<div class="t" style="left:572.5px;top:405.83px;font-size:16.5px;color:#00985a;font-weight:bold">1</div>
<div class="t" style="left:604.0px;top:405.83px;font-size:16.5px;color:#00985a;font-weight:bold;letter-spacing:-0.4px">Your details</div>
<div class="a" style="left:563.3px;top:426.0px;width:312.5px;height:3.6px;background:#00985a"></div>
<div class="a" style="left:563.2px;top:432.5px;width:312.6px;height:41.8px;border:1.5px solid #7ccfab;background:#fff"></div>
<div class="a" style="left:615.0px;top:432.5px;width:260.8px;height:19.0px;background:#d6e7fb;border:1px solid #a9c5f2;border-radius:1px"></div>
<div class="a" style="left:567.0px;top:451.2px;width:48.0px;height:1.0px;background:#7ccfab"></div>
<div class="a" style="left:624.0px;top:451.8px;width:251.8px;height:21.0px;background:#d6e7fb;border:1px solid #a9c5f2;border-radius:1px"></div>
<div class="t" style="left:566.6px;top:441.03px;font-size:10px;color:#2b2b33;">Surname</div>
<div class="t" style="left:566.6px;top:460.13px;font-size:10px;color:#2b2b33;">First names</div>
<div class="t" style="left:566.6px;top:484.53px;font-size:10px;color:#2b2b33;">Mr</div>
<div class="a" style="left:581.4px;top:478.0px;width:18.1px;height:18.0px;background:#fff;border:1px solid #b7c8ea;box-shadow:1px 1px 0 #d0d4d8"></div>
<div class="t" style="left:612.7px;top:484.53px;font-size:10px;color:#2b2b33;">Mrs</div>
<div class="a" style="left:632.4px;top:478.0px;width:17.6px;height:18.0px;background:#fff;border:1px solid #b7c8ea;box-shadow:1px 1px 0 #d0d4d8"></div>
<div class="t" style="left:664.7px;top:484.53px;font-size:10px;color:#2b2b33;">Miss</div>
<div class="a" style="left:687.7px;top:478.0px;width:17.3px;height:18.0px;background:#fff;border:1px solid #b7c8ea;box-shadow:1px 1px 0 #d0d4d8"></div>
<div class="t" style="left:720.0px;top:484.53px;font-size:10px;color:#2b2b33;">Ms</div>
<div class="a" style="left:736.1px;top:478.0px;width:17.5px;height:18.0px;background:#fff;border:1px solid #b7c8ea;box-shadow:1px 1px 0 #d0d4d8"></div>
<div class="t" style="left:566.6px;top:507.93px;font-size:10px;color:#2b2b33;">Other title</div>
<div class="t" style="left:566.6px;top:517.93px;font-size:10px;color:#2b2b33;">(for example, Rev)</div>
<div class="a" style="left:654.1px;top:499.7px;width:82.5px;height:20.3px;background:#d6e7fb;border:1px solid #a9c5f2;border-radius:1px"></div>
<div class="t" style="left:764.0px;top:507.93px;font-size:10px;color:#2b2b33;">Male</div>
<div class="a" style="left:788.4px;top:501.4px;width:17.0px;height:17.0px;background:#fff;border:1px solid #b7c8ea;box-shadow:1px 1px 0 #d0d4d8"></div>
<div class="t" style="left:818.8px;top:507.93px;font-size:10px;color:#2b2b33;">Female</div>
<div class="a" style="left:854.3px;top:501.4px;width:17.7px;height:17.0px;background:#fff;border:1px solid #b7c8ea;box-shadow:1px 1px 0 #d0d4d8"></div>
<div class="t" style="left:715.3px;top:524.53px;font-size:10px;color:#2b2b33;">Day</div>
<div class="t" style="left:756.5px;top:524.53px;font-size:10px;color:#2b2b33;">Month</div>
<div class="t" style="left:825.8px;top:524.53px;font-size:10px;color:#2b2b33;">Year</div>
<div class="t" style="left:566.6px;top:541.93px;font-size:10px;color:#2b2b33;">Date of birth</div>
<div class="a" style="left:704.0px;top:537.0px;width:35.5px;height:18.0px;background:#d6e7fb;border:1px solid #a9c5f2;border-radius:1px"></div>
<div class="a" style="left:721.8px;top:538.0px;width:1.0px;height:16.0px;border-left:1px dotted #b9cde8"></div>
<div class="a" style="left:750.8px;top:537.0px;width:35.1px;height:18.0px;background:#d6e7fb;border:1px solid #a9c5f2;border-radius:1px"></div>
<div class="a" style="left:768.3px;top:538.0px;width:1.0px;height:16.0px;border-left:1px dotted #b9cde8"></div>
<div class="a" style="left:797.1px;top:537.0px;width:72.3px;height:18.0px;background:#d6e7fb;border:1px solid #a9c5f2;border-radius:1px"></div>
<div class="a" style="left:815.2px;top:538.0px;width:1.0px;height:16.0px;border-left:1px dotted #b9cde8"></div>
<div class="a" style="left:833.2px;top:538.0px;width:1.0px;height:16.0px;border-left:1px dotted #b9cde8"></div>
<div class="a" style="left:851.3px;top:538.0px;width:1.0px;height:16.0px;border-left:1px dotted #b9cde8"></div>
<div class="t" style="left:566.6px;top:558.93px;font-size:10px;color:#2b2b33;letter-spacing:0.1px">What is your UK driver number (if you know it)?</div>
<div class="a" style="left:566.6px;top:572.0px;width:92.8px;height:19.7px;background:#d6e7fb;border:1px solid #a9c5f2;border-radius:1px"></div>
<div class="a" style="left:585.2px;top:573.0px;width:1.0px;height:17.7px;border-left:1px dotted #b9cde8"></div>
<div class="a" style="left:603.7px;top:573.0px;width:1.0px;height:17.7px;border-left:1px dotted #b9cde8"></div>
<div class="a" style="left:622.3px;top:573.0px;width:1.0px;height:17.7px;border-left:1px dotted #b9cde8"></div>
<div class="a" style="left:640.8px;top:573.0px;width:1.0px;height:17.7px;border-left:1px dotted #b9cde8"></div>
<div class="a" style="left:663.3px;top:572.0px;width:109.8px;height:19.7px;background:#d6e7fb;border:1px solid #a9c5f2;border-radius:1px"></div>
<div class="a" style="left:681.6px;top:573.0px;width:1.0px;height:17.7px;border-left:1px dotted #b9cde8"></div>
<div class="a" style="left:699.9px;top:573.0px;width:1.0px;height:17.7px;border-left:1px dotted #b9cde8"></div>
<div class="a" style="left:718.2px;top:573.0px;width:1.0px;height:17.7px;border-left:1px dotted #b9cde8"></div>
<div class="a" style="left:736.5px;top:573.0px;width:1.0px;height:17.7px;border-left:1px dotted #b9cde8"></div>
<div class="a" style="left:754.8px;top:573.0px;width:1.0px;height:17.7px;border-left:1px dotted #b9cde8"></div>
<div class="a" style="left:776.3px;top:572.0px;width:93.1px;height:19.7px;background:#d6e7fb;border:1px solid #a9c5f2;border-radius:1px"></div>
<div class="a" style="left:794.9px;top:573.0px;width:1.0px;height:17.7px;border-left:1px dotted #b9cde8"></div>
<div class="a" style="left:813.5px;top:573.0px;width:1.0px;height:17.7px;border-left:1px dotted #b9cde8"></div>
<div class="a" style="left:832.2px;top:573.0px;width:1.0px;height:17.7px;border-left:1px dotted #b9cde8"></div>
<div class="a" style="left:850.8px;top:573.0px;width:1.0px;height:17.7px;border-left:1px dotted #b9cde8"></div>
<div class="a" style="left:563.2px;top:595.3px;width:312.6px;height:124.3px;border:1.5px solid #7ccfab;background:#fff"></div>
<div class="t" style="left:566.6px;top:604.03px;font-size:10px;color:#2b2b33;">Current address</div>
<div class="a" style="left:645.2px;top:598.0px;width:226.8px;height:17.0px;background:#d6e7fb;border:1px solid #a9c5f2;border-radius:1px"></div>
<div class="a" style="left:567.0px;top:615.2px;width:306.0px;height:1.3px;background:#7ccfab"></div>
<div class="a" style="left:568.0px;top:618.3px;width:303.3px;height:15.5px;background:#d6e7fb;border:1px solid #a9c5f2;border-radius:1px"></div>
<div class="a" style="left:567.0px;top:635.2px;width:306.0px;height:1.3px;background:#7ccfab"></div>
<div class="t" style="left:566.6px;top:646.03px;font-size:10px;color:#2b2b33;">Post town</div>
<div class="a" style="left:614.2px;top:639.3px;width:127.7px;height:16.2px;background:#d6e7fb;border:1px solid #a9c5f2;border-radius:1px"></div>
<div class="t" style="left:749.1px;top:646.03px;font-size:10px;color:#2b2b33;">Postcode</div>
<div class="a" style="left:793.3px;top:639.3px;width:80.7px;height:16.2px;background:#d6e7fb;border:1px solid #a9c5f2;border-radius:1px"></div>
<div class="a" style="left:567.0px;top:657.0px;width:306.0px;height:1.3px;background:#7ccfab"></div>
<div class="t" style="left:566.6px;top:666.23px;font-size:10px;color:#2b2b33;">Place of birth (country)</div>
<div class="a" style="left:675.0px;top:660.5px;width:197.6px;height:15.7px;background:#d6e7fb;border:1px solid #a9c5f2;border-radius:1px"></div>
<div class="a" style="left:567.0px;top:677.0px;width:306.0px;height:1.3px;background:#7ccfab"></div>
<div class="t" style="left:566.6px;top:686.83px;font-size:10px;color:#2b2b33;">Full daytime phone number</div>
<div class="a" style="left:693.0px;top:680.7px;width:180.4px;height:16.8px;background:#d6e7fb;border:1px solid #a9c5f2;border-radius:1px"></div>
<div class="a" style="left:567.0px;top:698.3px;width:306.0px;height:1.3px;background:#7ccfab"></div>
<div class="t" style="left:566.6px;top:708.13px;font-size:10px;color:#2b2b33;">E-mail address</div>
<div class="a" style="left:639.2px;top:702.2px;width:235.9px;height:15.8px;background:#d6e7fb;border:1px solid #a9c5f2;border-radius:1px"></div>
<div class="t" style="left:564.4px;top:722.87px;font-size:9.6px;color:#2b2b33;font-weight:bold">Has your name or address (or both) changed</div>
<div class="t" style="left:564.4px;top:733.97px;font-size:9.6px;color:#2b2b33;font-weight:bold">since your last licence was issued?</div>
<div class="t" style="left:564.4px;top:747.37px;font-size:9.6px;color:#2b2b33;font-weight:bold;letter-spacing:0.28px">If ‘Yes’, write the previous details below.</div>
<div class="t" style="left:782.7px;top:733.97px;font-size:9.6px;color:#2b2b33;font-weight:bold">No</div>
<div class="a" style="left:800.1px;top:726.0px;width:19.3px;height:19.8px;background:#fff;border:1px solid #b7c8ea;box-shadow:1px 1px 0 #d0d4d8"></div>
<div class="t" style="left:830.5px;top:733.97px;font-size:9.6px;color:#2b2b33;font-weight:bold">Yes</div>
<div class="a" style="left:851.1px;top:726.0px;width:19.3px;height:19.8px;background:#fff;border:1px solid #b7c8ea;box-shadow:1px 1px 0 #d0d4d8"></div>
<div class="a" style="left:563.2px;top:758.3px;width:304.9px;height:21.7px;border:1.5px solid #62c095;background:#d6e7fb"></div>
<div class="a" style="left:888.2px;top:366.5px;width:28.6px;height:28.5px;background:#fff;border:1px solid #62c095;border-bottom:none"></div>
<div class="t" style="left:897.0px;top:374.03px;font-size:16.5px;color:#00985a;font-weight:bold">3</div>
<div class="t" style="left:929.0px;top:374.03px;font-size:16.5px;color:#00985a;font-weight:bold;letter-spacing:-0.3px">The licence you want</div>
<div class="a" style="left:888.2px;top:395.0px;width:312.5px;height:3.6px;background:#00985a"></div>
<div class="t" style="left:888.6px;top:400.64px;font-size:12px;color:#00985a;font-weight:bold;letter-spacing:0.35px">Start date</div>
<div class="t" style="left:952.4px;top:403.13px;font-size:10px;color:#2b2b33;letter-spacing:0.2px;-webkit-text-stroke:0.1px #2b2b33">Your licence starts on the day we issue it. You can</div>
<div class="t" style="left:888.2px;top:413.53px;font-size:10px;color:#2b2b33;letter-spacing:0.197px;-webkit-text-stroke:0.1px #2b2b33">ask for your licence to start from a later date but this cannot be</div>
<div class="t" style="left:888.2px;top:423.63px;font-size:10px;color:#2b2b33;letter-spacing:0.22px;-webkit-text-stroke:0.1px #2b2b33">more than two months after the day you apply.</div>
<div class="t" style="left:899.6px;top:438.83px;font-size:10px;color:#2b2b33;">Day</div>
<div class="t" style="left:937.8px;top:438.83px;font-size:10px;color:#2b2b33;">Month</div>
<div class="t" style="left:1001.3px;top:438.83px;font-size:10px;color:#2b2b33;">Year</div>
<div class="a" style="left:888.9px;top:449.6px;width:36.9px;height:18.6px;background:#d6e7fb;border:1px solid #a9c5f2;border-radius:1px"></div>
<div class="a" style="left:907.3px;top:450.6px;width:1.0px;height:16.6px;border-left:1px dotted #b9cde8"></div>
<div class="a" style="left:932.2px;top:449.6px;width:36.9px;height:18.6px;background:#d6e7fb;border:1px solid #a9c5f2;border-radius:1px"></div>
<div class="a" style="left:950.7px;top:450.6px;width:1.0px;height:16.6px;border-left:1px dotted #b9cde8"></div>
<div class="a" style="left:974.9px;top:449.6px;width:74.7px;height:18.6px;background:#d6e7fb;border:1px solid #a9c5f2;border-radius:1px"></div>
<div class="a" style="left:993.6px;top:450.6px;width:1.0px;height:16.6px;border-left:1px dotted #b9cde8"></div>
<div class="a" style="left:1012.2px;top:450.6px;width:1.0px;height:16.6px;border-left:1px dotted #b9cde8"></div>
<div class="a" style="left:1030.9px;top:450.6px;width:1.0px;height:16.6px;border-left:1px dotted #b9cde8"></div>
<div class="t" style="left:887.2px;top:474.66px;font-size:11.5px;color:#2b2b33;font-weight:bold;font-style:italic">Please tick the licence you want.</div>
<div class="a" style="left:1173.3px;top:480.5px;width:17.7px;height:17.2px;background:#fff;border:1px solid #b7c8ea;box-shadow:1px 1px 0 #d0d4d8"></div>
<div class="t" style="left:889.0px;top:490.03px;font-size:10px;color:#00985a;font-weight:bold">•</div>
<div class="t" style="left:898.2px;top:490.03px;font-size:10px;color:#00985a;font-weight:bold;letter-spacing:-0.45px">Provisional</div>
<div class="t" style="left:887.2px;top:502.33px;font-size:10px;color:#2b2b33;-webkit-text-stroke:0.15px #2b2b33">If you are 16 and getting Disability Living Allowance</div>
<div class="t" style="left:887.2px;top:512.93px;font-size:10px;color:#2b2b33;-webkit-text-stroke:0.15px #2b2b33;letter-spacing:0.06px">(mobility component) at the higher rate, and want to drive a car</div>
<div class="a" style="left:1173.3px;top:502.6px;width:17.7px;height:17.5px;background:#fff;border:1px solid #b7c8ea;box-shadow:1px 1px 0 #d0d4d8"></div>
<div class="t" style="left:889.0px;top:526.53px;font-size:10px;color:#00985a;font-weight:bold">•</div>
<div class="t" style="left:898.2px;top:526.53px;font-size:10px;color:#00985a;font-weight:bold;letter-spacing:-0.3px">Replacement</div>
<div class="t" style="left:898.2px;top:538.83px;font-size:10px;color:#2b2b33;letter-spacing:-0.24px">Replace my licence due to a change of name or address</div>
<div class="t" style="left:898.2px;top:548.53px;font-size:10px;color:#2b2b33;letter-spacing:-0.24px">(or both). I am enclosing my current driving licence.</div>
<div class="a" style="left:1174.3px;top:539.3px;width:17.3px;height:16.9px;background:#fff;border:1px solid #b7c8ea;box-shadow:1px 1px 0 #d0d4d8"></div>
<div class="t" style="left:889.0px;top:563.23px;font-size:10px;color:#00985a;font-weight:bold">•</div>
<div class="t" style="left:898.2px;top:563.23px;font-size:10px;color:#00985a;font-weight:bold;letter-spacing:-0.1px">Duplicate</div>
<div class="t" style="left:898.2px;top:575.33px;font-size:10px;color:#2b2b33;">My licence has been:</div>
<div class="t" style="left:897.5px;top:597.23px;font-size:10px;color:#2b2b33;">lost or stolen</div>
<div class="a" style="left:959.4px;top:588.0px;width:16.1px;height:16.3px;background:#fff;border:1px solid #b7c8ea;box-shadow:1px 1px 0 #d0d4d8"></div>
<div class="t" style="left:1026.0px;top:597.23px;font-size:10px;color:#2b2b33;">defaced</div>
<div class="a" style="left:1066.0px;top:588.0px;width:16.6px;height:16.3px;background:#fff;border:1px solid #b7c8ea;box-shadow:1px 1px 0 #d0d4d8"></div>
<div class="t" style="left:1125.0px;top:597.23px;font-size:10px;color:#2b2b33;">destroyed</div>
<div class="a" style="left:1174.0px;top:588.0px;width:17.0px;height:16.3px;background:#fff;border:1px solid #b7c8ea;box-shadow:1px 1px 0 #d0d4d8"></div>
<div class="t" style="left:890.5px;top:613.13px;font-size:10px;color:#00985a;font-weight:bold">•</div>
<div class="t" style="left:899.6px;top:613.13px;font-size:10px;color:#00985a;font-weight:bold">Exchange</div>
<div class="a" style="left:887.2px;top:756.3px;width:318.7px;height:23.7px;background:#c5e6d8"></div>
<div class="t" style="left:905.2px;top:626.13px;font-size:10px;color:#2b2b33;letter-spacing:0.08px">Change my licence following a test pass.</div>
<div class="a" style="left:1174.0px;top:618.1px;width:17.0px;height:16.5px;background:#fff;border:1px solid #b7c8ea;box-shadow:1px 1px 0 #d0d4d8"></div>
<div class="t" style="left:905.2px;top:649.23px;font-size:10px;color:#2b2b33;letter-spacing:0.08px">Enter categories in the box.</div>
<div class="t" style="left:905.2px;top:669.83px;font-size:10px;color:#2b2b33;letter-spacing:-0.22px">Remove expired endorsements or suspension details.</div>
<div class="a" style="left:1174.0px;top:660.6px;width:17.0px;height:16.5px;background:#fff;border:1px solid #b7c8ea;box-shadow:1px 1px 0 #d0d4d8"></div>
<div class="t" style="left:905.2px;top:688.43px;font-size:10px;color:#2b2b33;letter-spacing:0.08px">Add provisional motorcycle entitlement.</div>
<div class="a" style="left:1174.0px;top:680.6px;width:17.0px;height:16.5px;background:#fff;border:1px solid #b7c8ea;box-shadow:1px 1px 0 #d0d4d8"></div>
<div class="t" style="left:905.2px;top:707.33px;font-size:10px;color:#2b2b33;letter-spacing:0.08px">Exchange my paper licence for a photocard licence.</div>
<div class="a" style="left:1174.0px;top:699.2px;width:17.0px;height:16.5px;background:#fff;border:1px solid #b7c8ea;box-shadow:1px 1px 0 #d0d4d8"></div>
<div class="t" style="left:905.2px;top:726.53px;font-size:10px;color:#2b2b33;letter-spacing:0.08px">Change my photograph.</div>
<div class="a" style="left:1174.0px;top:717.7px;width:17.0px;height:16.5px;background:#fff;border:1px solid #b7c8ea;box-shadow:1px 1px 0 #d0d4d8"></div>
<div class="t" style="left:905.2px;top:745.13px;font-size:10px;color:#2b2b33;letter-spacing:0.08px">Exchange my Northern Ireland licence.</div>
<div class="a" style="left:1174.0px;top:737.3px;width:17.0px;height:16.5px;background:#fff;border:1px solid #b7c8ea;box-shadow:1px 1px 0 #d0d4d8"></div>
<div class="t" style="left:905.2px;top:767.33px;font-size:10px;color:#2b2b33;letter-spacing:0.08px">Exchange my foreign licence from British</div>
<div class="a" style="left:1174.0px;top:759.0px;width:17.0px;height:16.5px;background:#fff;border:1px solid #b7c8ea;box-shadow:1px 1px 0 #d0d4d8"></div>
<div class="a" style="left:1033.7px;top:637.7px;width:157.2px;height:19.6px;background:#d6e7fb;border:1px solid #62c095;border-radius:1px"></div>
<div class="a" style="left:1205.1px;top:369.3px;width:86.5px;height:197.2px;border:1.6px solid #80878a"></div>
<div class="t" style="left:1210.7px;top:379.83px;font-size:10px;color:#2b2b33;font-weight:bold">Official use only</div>
<div class="t" style="left:1207.4px;top:419.53px;font-size:10px;color:#2b2b33;">Passport</div>
<div class="a" style="left:1263.5px;top:414.0px;width:13.4px;height:13.7px;background:#fff;border:1px solid #b7c8ea;box-shadow:1px 1px 0 #d0d4d8"></div>
<div class="t" style="left:1207.4px;top:444.43px;font-size:10px;color:#2b2b33;">B/cert</div>
<div class="a" style="left:1263.5px;top:439.0px;width:13.4px;height:13.7px;background:#fff;border:1px solid #b7c8ea;box-shadow:1px 1px 0 #d0d4d8"></div>
<div class="t" style="left:1207.4px;top:470.43px;font-size:10px;color:#2b2b33;">M/cert</div>
<div class="a" style="left:1263.5px;top:464.4px;width:13.4px;height:13.7px;background:#fff;border:1px solid #b7c8ea;box-shadow:1px 1px 0 #d0d4d8"></div>
<div class="t" style="left:1207.4px;top:495.33px;font-size:10px;color:#2b2b33;">Other</div>
<div class="a" style="left:1208.2px;top:508.7px;width:71.1px;height:17.8px;background:#d6e7fb;border:1px solid #a9c5f2;border-radius:1px"></div>
<div class="t" style="left:1207.4px;top:544.13px;font-size:10px;color:#2b2b33;">No ID</div>
<div class="a" style="left:1263.5px;top:537.7px;width:13.4px;height:14.3px;background:#fff;border:1px solid #b7c8ea;box-shadow:1px 1px 0 #d0d4d8"></div>
</div>
<!-- arrow annotation -->
<svg class="a" style="left:0;top:0" width="1600" height="860">
  <circle cx="1369" cy="318" r="23" fill="#f43f4f"/>
  <path d="M1401.5,310.5 C1442,297 1473,262 1476,196" fill="none" stroke="#f43f4f" stroke-width="3.5" stroke-linecap="butt"/>
  <path d="M1464.5,205.8 L1476,194.8 L1487.5,205.8" fill="none" stroke="#f43f4f" stroke-width="3.5" stroke-linecap="butt" stroke-linejoin="miter"/>
</svg>
<div class="a wt" style="left:1346px;top:307px;width:46px;text-align:center;font-size:28.6px;color:#fff;-webkit-text-stroke:0.9px #fff">3</div>
</body></html>
